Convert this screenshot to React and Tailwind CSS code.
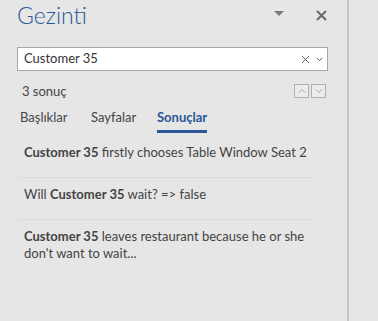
import { X, ChevronDown, ChevronUp } from "lucide-react";

const RESULTS = [
  { pre: "", post: " firstly chooses Table Window Seat 2" },
  { pre: "Will ", post: " wait? => false" },
  { pre: "", post: " leaves restaurant because he or she don't want to wait..." },
];

export default function App() {
  return (
    <div
      className="flex h-[321px] w-[378px] bg-[#e6e6e6] text-[#444444] overflow-hidden"
      style={{ fontFamily: 'Lato, "Noto Sans", sans-serif' }}
    >
      <div className="w-[349px] border-r-2 border-[#c6c6c6] flex flex-col">
        <div className="flex items-center h-[34px] pl-[17px] pr-[20px]">
          <h1 className="text-[23px] font-light text-[#2b579a] leading-none flex-1 -mt-[3px]">Gezinti</h1>
          <svg width="10" height="6" viewBox="0 0 10 6" className="mr-[32px] -mt-[6px]">
            <path d="M0 0 L10 0 L5 5 Z" fill="#7a7a7a" />
          </svg>
          <svg width="11" height="11" viewBox="0 0 11 11" className="-mt-[4px]">
            <path d="M1 1 L10 10 M10 1 L1 10" stroke="#6a6a6a" strokeWidth="2" />
          </svg>
        </div>

        <div className="mt-[13px] ml-[17px] w-[311px] h-[24px] bg-white border border-[#a6a6a6] flex items-center pl-[6px] pr-[3px]">
          <span className="text-[13px] flex-1 text-[#333]">Customer 35</span>
          <X size={13} strokeWidth={1.5} className="text-[#444] mr-[3px]" />
          <ChevronDown size={9} strokeWidth={2.5} className="text-[#444]" />
        </div>

        <div className="flex items-center mt-[12px] pl-[22px] pr-[21px]">
          <span className="text-[13px] flex-1 leading-[16px]">3 sonuç</span>
          <div className="flex gap-[2px]">
            <div className="w-[15px] h-[14px] border border-[#b0b0b0] bg-[#ececec] flex items-center justify-center">
              <ChevronUp size={12} strokeWidth={1.2} className="text-[#777]" />
            </div>
            <div className="w-[15px] h-[14px] border border-[#b0b0b0] bg-[#ececec] flex items-center justify-center">
              <ChevronDown size={12} strokeWidth={1.2} className="text-[#777]" />
            </div>
          </div>
        </div>

        <div className="flex mt-[10px] pl-[20px] text-[13px] leading-[16px]">
          <div className="w-[71px]">Başlıklar</div>
          <div className="w-[66px]">Sayfalar</div>
          <div className="flex flex-col items-center">
            <div className="font-bold text-[#2b579a]">Sonuçlar</div>
            <div className="mt-[5px] h-[3px] w-[50px] bg-[#2b579a]" />
          </div>
        </div>

        <div className="ml-[17px] w-[299px] mt-[3px]">
          {RESULTS.map((r, i) => (
            <div
              key={i}
              className={
                "pl-[7px] pr-[8px] text-[13px] leading-[17px] " +
                (i < RESULTS.length - 1 ? "border-b border-[#dcdcdc] pt-[8px] pb-[16px]" : "pt-[8px]")
              }
            >
              {r.pre}
              <span className="font-bold">Customer 35</span>
              {r.post}
            </div>
          ))}
        </div>
      </div>
      <div className="flex-1" />
    </div>
  );
}
